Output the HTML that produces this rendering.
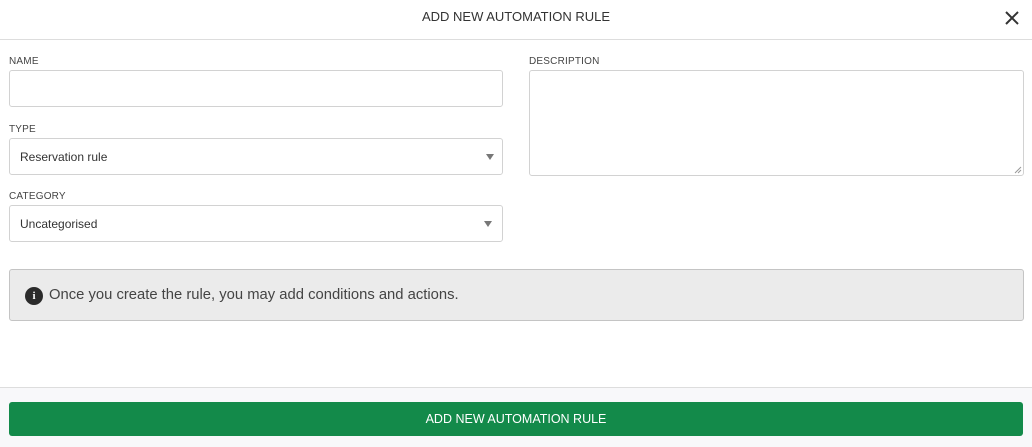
<!DOCTYPE html>
<html><head><style>
*{box-sizing:border-box;margin:0;padding:0}
body{width:1032px;height:447px;background:#fff;font-family:"Liberation Sans",sans-serif;color:#333;position:relative;overflow:hidden}
.abs{position:absolute}
.hdr{left:0;top:0;width:1032px;height:40px;border-bottom:1px solid #ddd}
.title{left:0;width:1032px;top:9px;text-align:center;font-size:13px;color:#333}
.lbl{font-size:10px;color:#444;letter-spacing:.2px}
.inp{border:1px solid #d2d2d2;border-radius:3px;background:#fff}
.sel{font-size:12px;color:#333;padding-left:10px;display:flex;align-items:center}
.arr{position:absolute;right:8px;top:15px;width:0;height:0;border-left:4px solid transparent;border-right:4px solid transparent;border-top:6px solid #777}
.info{left:9px;top:269px;width:1015px;height:52px;background:#ebebeb;border:1px solid #c4c4c4;border-radius:3px;font-size:14.8px;color:#444;display:flex;align-items:center;padding-left:15px}
.ic{width:18px;height:18px;border-radius:50%;background:#2b2b2b;color:#fff;font-size:11px;font-weight:bold;text-align:center;line-height:18px;margin-right:6px;margin-top:2px;font-family:"Liberation Serif",serif}
.ftr{left:0;top:387px;width:1032px;height:60px;background:#f8f8fa;border-top:1px solid #ddd}
.btn{left:9px;top:402px;width:1014px;height:34px;background:#138a4a;border-radius:3px;color:#fff;font-size:12.5px;text-align:center;line-height:34px}
</style></head><body>
<div class="abs hdr"></div>
<div class="abs title">ADD NEW AUTOMATION RULE</div>
<svg class="abs" style="left:1005px;top:11px" width="14" height="14" viewBox="0 0 14 14"><path d="M1 1L13 13M13 1L1 13" stroke="#333" stroke-width="2"/></svg>

<div class="abs lbl" style="left:9px;top:56px">NAME</div>
<div class="abs inp" style="left:9px;top:70px;width:494px;height:37px"></div>
<div class="abs lbl" style="left:9px;top:124px">TYPE</div>
<div class="abs inp sel" style="left:9px;top:138px;width:494px;height:37px">Reservation rule<span class="arr" style="right:8px"></span></div>
<div class="abs lbl" style="left:9px;top:191px">CATEGORY</div>
<div class="abs inp sel" style="left:9px;top:205px;width:494px;height:37px">Uncategorised<span class="arr" style="right:10px"></span></div>

<div class="abs lbl" style="left:529px;top:56px">DESCRIPTION</div>
<div class="abs inp" style="left:529px;top:70px;width:495px;height:106px"></div>
<svg class="abs" style="left:1014px;top:166px" width="8" height="8"><path d="M1 7L7 1M4 7L7 4" stroke="#999" stroke-width="1"/></svg>

<div class="abs info"><span class="ic">i</span>Once you create the rule, you may add conditions and actions.</div>

<div class="abs ftr"></div>
<div class="abs btn">ADD NEW AUTOMATION RULE</div>
</body></html>
